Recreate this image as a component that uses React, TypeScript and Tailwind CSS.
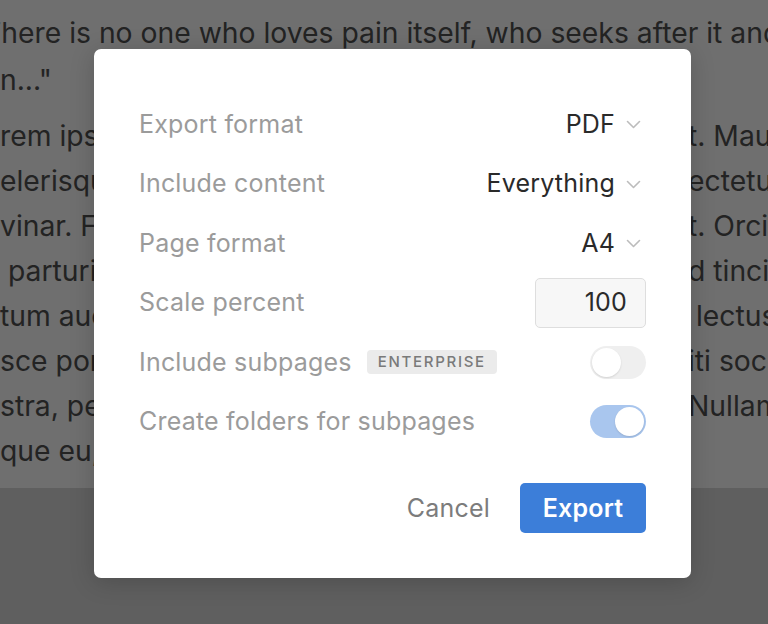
import React from "react";

function Chevron() {
  return (
    <svg width="15" height="9" viewBox="0 0 15 9" fill="none" className="shrink-0">
      <path d="M1.5 1.5l6 6 6-6" stroke="#bcbcbc" strokeWidth="1.6" strokeLinecap="round" strokeLinejoin="round" />
    </svg>
  );
}

function Select({ value }: { value: string }) {
  return (
    <div className="flex items-center gap-[11px] pr-[5px]">
      <span className="text-[#2a2a2a]">{value}</span>
      <Chevron />
    </div>
  );
}

function Toggle({ on }: { on: boolean }) {
  return (
    <div
      className={
        on
          ? "w-[56px] h-[33px] rounded-full bg-[#a9c6ee] flex items-center justify-end px-[2px]"
          : "w-[56px] h-[33px] rounded-full bg-[#efefef] flex items-center justify-start px-[2px]"
      }
    >
      <div className="w-[29px] h-[29px] rounded-full bg-white shadow-[0_1px_2px_rgba(0,0,0,0.12)]" />
    </div>
  );
}

function Row({ label, children }: { label: React.ReactNode; children: React.ReactNode }) {
  return (
    <div className="h-[59.4px] flex items-center justify-between">
      <div className="flex items-center text-[#9b9b9b]">{label}</div>
      {children}
    </div>
  );
}

const lines: [string, string][] = [
  ["rem ipsum dolor sit amet, consectetur adipiscing elit.", "t. Mauris"],
  ["elerisque nunc vel tortor lacinia, sit amet consectetur", "ectetur"],
  ["vinar. Fusce vitae lorem in ligula lobortis feugiat.", "t. Orci"],
  ["\u00a0parturient montes, nascetur ridiculus mus, sed tinci", "d tincidunt"],
  ["tum auctor, purus nunc fringilla ipsum, et lectus", "\u00a0lectus"],
  ["sce porttitor, nulla ut facilisis potenti sociosqu", "iti sociosqu"],
  ["stra, per inceptos himenaeos. Nullam", "Nullam"],
  ["que eu, ", ""],
];

export default function App() {
  return (
    <div className="relative w-[768px] h-[624px] overflow-hidden bg-[#5f5f5f] font-['Inter',sans-serif]">
      {/* dimmed page */}
      <div className="h-[488px] bg-[#6f6f6f] text-[#232323] text-[28.3px] overflow-hidden">
        <div className="pt-[10px] leading-[47px] whitespace-nowrap">
          <div className="-ml-[17px]">There is no one who loves pain itself, who seeks after it and wants to have it,</div>
          <div>n..."</div>
        </div>
        <div className="mt-[10px] leading-[45px]">
          {lines.map(([l, r], i) => (
            <div key={i} className="grid grid-cols-[688px_1fr] whitespace-nowrap">
              <div className="overflow-hidden">{l}</div>
              <div className="overflow-hidden">{r}</div>
            </div>
          ))}
        </div>
      </div>

      {/* modal */}
      <div className="absolute left-[94px] top-[49px] w-[597px] h-[529px] bg-white rounded-[7px] shadow-[0_4px_24px_rgba(0,0,0,0.18)] px-[45px] pt-[46px] flex flex-col text-[25px] tracking-[0.2px]">
        <Row label="Export format">
          <Select value="PDF" />
        </Row>
        <Row label="Include content">
          <Select value="Everything" />
        </Row>
        <Row label="Page format">
          <Select value="A4" />
        </Row>
        <Row label="Scale percent">
          <div className="w-[111px] h-[50px] rounded-[5px] border border-[#dedede] bg-[#f7f7f7] flex items-center justify-end pr-[18px] text-[#2a2a2a]">
            100
          </div>
        </Row>
        <Row
          label={
            <>
              <span>Include subpages</span>
              <span className="ml-[15px] h-[24px] px-[11px] rounded-[4px] bg-[#ebebeb] text-[#7a7a7a] text-[15px] font-medium tracking-[1.7px] flex items-center">
                ENTERPRISE
              </span>
            </>
          }
        >
          <Toggle on={false} />
        </Row>
        <Row label="Create folders for subpages">
          <Toggle on={true} />
        </Row>
        <div className="mt-[32px] flex items-center justify-end gap-[30px]">
          <span className="text-[#7c7c7c]">Cancel</span>
          <div className="w-[126px] h-[50px] rounded-[5px] bg-[#3c7ed9] text-white font-semibold flex items-center justify-center">
            Export
          </div>
        </div>
      </div>
    </div>
  );
}
